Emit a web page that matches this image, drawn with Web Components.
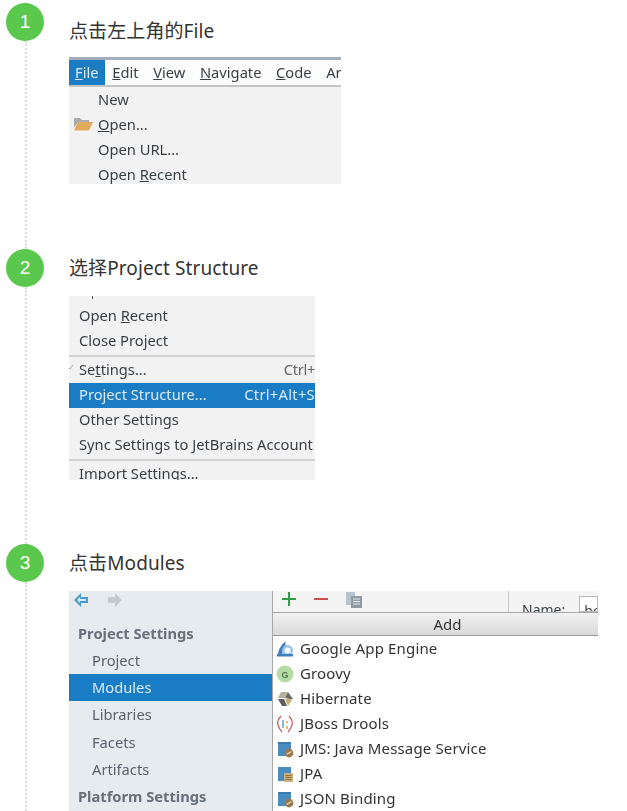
<!DOCTYPE html>
<html lang="zh">
<head>
<meta charset="utf-8">
<title>Modules</title>
<style>
    html, body { margin: 0; height: 811px; overflow: hidden; background: #fff; }
    body { font-family: "Noto Sans", "Noto Sans CJK SC", sans-serif; padding-top: 3px; box-sizing: border-box; }
</style>
</head>
<body>
<guide-step num="1" label="点击左上角的File" first>
    <shot-frame style="--w:272px;--h:127px">
        <menu-bar>
            <bar-item active><u>F</u>ile</bar-item>
            <bar-item><u>E</u>dit</bar-item>
            <bar-item><u>V</u>iew</bar-item>
            <bar-item><u>N</u>avigate</bar-item>
            <bar-item><u>C</u>ode</bar-item>
            <bar-item>Ar</bar-item>
        </menu-bar>
        <menu-row indent="29">New</menu-row>
        <menu-row indent="29">
            <svg slot="icon" width="19" height="13" viewBox="0 0 19 13" style="margin-left:5px">
                <path d="M0 0h6l2 2h7v2H4L0 10z" fill="#a9adb0"/>
                <path d="M4 4h15l-4 8.500H0z" fill="#e0ab5c"/>
            </svg>
            <u>O</u>pen...
        </menu-row>
        <menu-row indent="29">Open URL...</menu-row>
        <menu-row indent="29">Open <u>R</u>ecent</menu-row>
    </shot-frame>
</guide-step>

<guide-step num="2" label="选择Project Structure">
    <shot-frame style="--w:246px;--h:184px">
        <menu-row indent="10" style="height:7.5px;padding-bottom:0;align-items:flex-start"><span style="display:block;width:1px;height:3px;margin-left:13px;background:#555"></span></menu-row>
        <menu-row indent="10">Open <u>R</u>ecent</menu-row>
        <menu-row indent="10">Close Project</menu-row>
        <menu-sep></menu-sep>
        <menu-row indent="10" shortcut="Ctrl+">
            <svg slot="icon" width="6" height="6" viewBox="0 0 6 6" style="margin-left:-1px"><path d="M1 4l1 1 3-4" fill="none" stroke="#aaa" stroke-width="1"/></svg>
            Se<u>t</u>tings...
        </menu-row>
        <menu-row indent="10" shortcut="Ctrl+Alt+S" active>Project Structure...</menu-row>
        <menu-row indent="10">Other Settings</menu-row>
        <menu-row indent="10">Sync Settings to JetBrains Account</menu-row>
        <menu-sep></menu-sep>
        <menu-row indent="10">Import Settings...</menu-row>
    </shot-frame>
</guide-step>

<guide-step num="3" label="点击Modules">
    <shot-frame style="--w:529px;--h:220px;--bg:#fff">
        <settings-dialog>
            <side-row slot="side" kind="head">Project Settings</side-row>
            <side-row slot="side">Project</side-row>
            <side-row slot="side" active>Modules</side-row>
            <side-row slot="side">Libraries</side-row>
            <side-row slot="side">Facets</side-row>
            <side-row slot="side">Artifacts</side-row>
            <side-row slot="side" kind="head">Platform Settings</side-row>

            <add-row>
                <svg slot="icon" width="18" height="18" viewBox="0 0 18 18">
                    <path d="M2 14C3 8 6 4 10 1c-1 2-1 4 0 5l-4 8z" fill="#3f7fc0"/>
                    <circle cx="11.500" cy="10.500" r="5.500" fill="#9cc3e6"/><circle cx="11.500" cy="10.500" r="3" fill="#f4f9fd"/>
                    <path d="M1 14h16v2.500H1z" fill="#3f7fc0"/>
                </svg>
                Google App Engine
            </add-row>
            <add-row>
                <svg slot="icon" width="18" height="18" viewBox="0 0 18 18">
                    <circle cx="9" cy="9" r="8.500" fill="#b5dca4"/>
                    <text x="9" y="12.500" font-size="9" font-weight="700" text-anchor="middle" fill="#5c6f58" font-family="Liberation Sans">G</text>
                </svg>
                Groovy
            </add-row>
            <add-row>
                <svg slot="icon" width="18" height="18" viewBox="0 0 18 18">
                    <path d="M5 2h7l-3 6H2z" fill="#b9b29a"/>
                    <path d="M12 2l5 7-3 0-5-1z" fill="#6e6a63"/>
                    <path d="M2 9h6l3 7H6z" fill="#5f5e5c"/>
                    <path d="M9 9h6l1 1-4 6z" fill="#c8b27a"/>
                </svg>
                Hibernate
            </add-row>
            <add-row>
                <svg slot="icon" width="18" height="18" viewBox="0 0 18 18" fill="none">
                    <path d="M5 1C2 4 1 7 2 10c1 3 2 5 4 7" stroke="#c9535b" stroke-width="1.200"/>
                    <path d="M13 1c3 3 4 6 3 9-1 3-2 5-4 7" stroke="#c9535b" stroke-width="1.200"/>
                    <path d="M7 5v8" stroke="#6aa9dc" stroke-width="1.600"/>
                    <path d="M11 6v2M11 11v3" stroke="#e0a53f" stroke-width="1.600"/>
                </svg>
                JBoss Drools
            </add-row>
            <add-row>
                <svg slot="icon" width="18" height="18" viewBox="0 0 18 18">
                    <path d="M2 2h13v14H2z" fill="#4a8cc0"/>
                    <path d="M2 2h13v2H2z" fill="#3a7aae"/>
                    <circle cx="13" cy="13" r="4.400" fill="#9a7a4d"/>
                    <path d="M10.500 14.500l5-3" stroke="#e8d9bc" stroke-width="1.200"/>
                </svg>
                JMS: Java Message Service
            </add-row>
            <add-row>
                <svg slot="icon" width="18" height="18" viewBox="0 0 18 18">
                    <path d="M2 2h13v14H2z" fill="#4a8cc0"/>
                    <path d="M8 8h9v9H8z" fill="#c9b07c"/>
                    <path d="M9.500 10.500h6M9.500 12.500h6M9.500 14.500h6" stroke="#8b6f3f"/>
                </svg>
                JPA
            </add-row>
            <add-row>
                <svg slot="icon" width="18" height="18" viewBox="0 0 18 18">
                    <path d="M2 2h13v14H2z" fill="#4a8cc0"/>
                    <path d="M2 2h13v2H2z" fill="#3a7aae"/>
                    <circle cx="13" cy="13" r="4.400" fill="#9a7a4d"/>
                    <path d="M10.500 14.500l5-3" stroke="#e8d9bc" stroke-width="1.200"/>
                </svg>
                JSON Binding
            </add-row>
        </settings-dialog>
    </shot-frame>
</guide-step>

<script>
class GuideStep extends HTMLElement {
    constructor() {
        super();
        this.attachShadow({ mode: "open" });
    }
    connectedCallback() {
        this.shadowRoot.innerHTML = `
            <style>
                :host { display: grid; grid-template-columns: 69px 1fr; padding-bottom: 64px; }
                :host([first]) { padding-bottom: 65px; }
                .rail { display: flex; flex-direction: column; margin-left: 6px; margin-bottom: -64px; }
                :host([first]) .rail { margin-bottom: -65px; }
                .num {
                    width: 38px; height: 38px; border-radius: 50%;
                    background: #5ac84d; color: #fff;
                    font: 19px/38px "Liberation Sans", sans-serif;
                    text-align: center; flex: none;
                }
                .line { flex: 1; margin-left: 19px; border-left: 2px dotted #dcdcdc; }
                .label {
                    font-size: 19px; line-height: 28px; color: #333; letter-spacing: .1px;
                    padding-top: 5px; margin-bottom: 14px;
                    font-family: "Noto Sans", "Noto Sans CJK SC", sans-serif;
                }
                :host([first]) .label { padding-top: 14px; margin-bottom: 12px; }
            </style>
            <div class="rail">
                <div class="num">${this.getAttribute("num")}</div>
                <div class="line"></div>
            </div>
            <div>
                <div class="label">${this.getAttribute("label")}</div>
                <slot></slot>
            </div>
        `;
    }
}

class ShotFrame extends HTMLElement {
    constructor() {
        super();
        this.attachShadow({ mode: "open" });
        this.shadowRoot.innerHTML = `
            <style>
                :host {
                    display: block; width: var(--w); height: var(--h);
                    background: var(--bg, #f2f2f2); overflow: hidden;
                    font: 14.7px/25px "Noto Sans", sans-serif; color: #3a3f45;
                    filter: blur(.3px);
                }
            </style>
            <slot></slot>
        `;
    }
}

class MenuBar extends HTMLElement {
    constructor() {
        super();
        this.attachShadow({ mode: "open" });
        this.shadowRoot.innerHTML = `
            <style>
                :host {
                    display: flex; height: 25px; background: #fdfdfd; white-space: nowrap;
                    border-top: 3px solid #a4adbb; border-bottom: 2px solid #c4c4c4;
                }
            </style>
            <slot></slot>
        `;
    }
}

class BarItem extends HTMLElement {
    constructor() {
        super();
        this.attachShadow({ mode: "open" });
        this.shadowRoot.innerHTML = `
            <style>
                :host { display: block; padding: 0 7.3px; line-height: 25px; font-size: 14.7px; }
                :host([active]) { background: #1a7cc4; color: #dbeaf6; padding: 0 6.5px 0 6px; }
            </style>
            <slot></slot>
        `;
    }
}

class MenuRow extends HTMLElement {
    constructor() {
        super();
        this.attachShadow({ mode: "open" });
    }
    connectedCallback() {
        const shortcut = this.getAttribute("shortcut");
        this.shadowRoot.innerHTML = `
            <style>
                :host {
                    display: flex; align-items: center; height: 25px; white-space: nowrap;
                    box-sizing: border-box; padding-bottom: 1px;
                    padding-left: ${this.getAttribute("indent")}px;
                    position: relative;
                }
                :host([active]) { background: #1a7cc4; color: #dbeaf6; }
                .icon { position: absolute; left: 0; top: 6px; line-height: 0; }
                .shortcut { margin-left: auto; color: #666; letter-spacing: -.3px; }
                :host([active]) .shortcut { color: #dbeaf6; letter-spacing: .3px; }
            </style>
            <span class="icon"><slot name="icon"></slot></span>
            <span><slot></slot></span>
            ${shortcut ? `<span class="shortcut">${shortcut}</span>` : ""}
        `;
    }
}

class MenuSep extends HTMLElement {
    constructor() {
        super();
        this.attachShadow({ mode: "open" });
        this.shadowRoot.innerHTML = `
            <style>
                :host { display: block; height: 2px; margin: 1px 0; background: #d2d2d2; }
            </style>
        `;
    }
}

class SettingsDialog extends HTMLElement {
    constructor() {
        super();
        this.attachShadow({ mode: "open" });
        this.shadowRoot.innerHTML = `
            <style>
                :host { display: flex; height: 100%; }
                aside { width: 203px; background: #e6ebf0; flex: none; border-right: 1px solid #a8a8a8; }
                .nav { display: flex; height: 28.6px; gap: 18px; padding: 1px 0 0 4px; box-sizing: border-box; }
                main { flex: 1; min-width: 0; display: flex; flex-direction: column; }
                .tools { display: flex; height: 21px; background: #f4f4f4; overflow: hidden; flex: none; }
                .btns { display: flex; flex: none; gap: 18px; padding: 1px 0 0 9px; width: 235px; box-sizing: border-box; }
                .name {
                    flex: 1; min-width: 0; display: flex; gap: 14px; padding: 9px 0 0 13px;
                    border-left: 1px solid #c8c8c8; font-size: 14px; line-height: 20px;
                }
                .name b {
                    font-weight: 400; background: #fff; border: 1px solid #b8b8b8;
                    margin-top: -4px; padding: 4px 0 0 4px; flex: 1; min-width: 0; overflow: hidden;
                }
                .head {
                    flex: none; height: 22px; line-height: 23px; text-align: center;
                    background: linear-gradient(#f2f2f2, #d9d9d9);
                    border-top: 1px solid #a5a5a5; border-bottom: 1px solid #9a9a9a;
                    color: #333; font-size: 15px; padding-left: 24px;
                }
            </style>
            <aside>
                <div class="nav">
                    <svg width="16" height="16" viewBox="0 0 16 16"><path d="M1 8l7-7v4h7v6H8v4z" fill="#4b9ccb"/><path d="M4 8l3-3v2h6v2H7v2z" fill="#d8e8f2"/></svg>
                    <svg width="16" height="16" viewBox="0 0 16 16"><path d="M15 8L8 1v4H1v6h7v4z" fill="#c6cacd"/></svg>
                </div>
                <slot name="side"></slot>
            </aside>
            <main>
                <div class="tools">
                    <div class="btns">
                        <svg width="14" height="14" viewBox="0 0 14 14"><path d="M6 0h2v6h6v2H8v6H6V8H0V6h6z" fill="#2f9e44"/></svg>
                        <svg width="14" height="14" viewBox="0 0 14 14"><path d="M0 6h14v2H0z" fill="#c9524f"/></svg>
                        <svg width="16" height="16" viewBox="0 0 16 16"><path d="M0 0h9v13H0z" fill="#b9c3cc"/><path d="M5 4h11v12H5z" fill="#8f9aa3"/><path d="M7 7h7M7 9.500h7M7 12h7" stroke="#e8eaec"/></svg>
                    </div>
                    <div class="name">Name:<b>he</b></div>
                </div>
                <div class="head">Add</div>
                <div><slot></slot></div>
            </main>
        `;
    }
}

class SideRow extends HTMLElement {
    constructor() {
        super();
        this.attachShadow({ mode: "open" });
        this.shadowRoot.innerHTML = `
            <style>
                :host {
                    display: block; height: 27.3px; line-height: 27.3px; padding-left: 23px;
                    color: #59626b; white-space: nowrap;
                }
                :host([kind="head"]) { padding-left: 9px; font-weight: 700; color: #666f7a; }
                :host([active]) { background: #1a7cc4; color: #dbeaf6; }
            </style>
            <slot></slot>
        `;
    }
}

class AddRow extends HTMLElement {
    constructor() {
        super();
        this.attachShadow({ mode: "open" });
        this.shadowRoot.innerHTML = `
            <style>
                :host {
                    display: flex; align-items: center; gap: 6px; height: 25px;
                    padding-left: 3px; white-space: nowrap; color: #333;
                    font-size: 15px; letter-spacing: .15px;
                }
                .icon { width: 18px; height: 18px; line-height: 0; flex: none; }
            </style>
            <span class="icon"><slot name="icon"></slot></span>
            <span><slot></slot></span>
        `;
    }
}

customElements.define("guide-step", GuideStep);
customElements.define("shot-frame", ShotFrame);
customElements.define("menu-bar", MenuBar);
customElements.define("bar-item", BarItem);
customElements.define("menu-row", MenuRow);
customElements.define("menu-sep", MenuSep);
customElements.define("settings-dialog", SettingsDialog);
customElements.define("side-row", SideRow);
customElements.define("add-row", AddRow);
</script>
</body>
</html>
